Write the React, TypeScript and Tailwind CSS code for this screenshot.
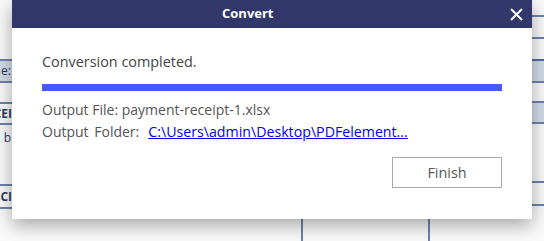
import React from "react";

const font = { fontFamily: '"Open Sans", "Noto Sans", sans-serif' };

function RightStrip() {
  return (
    <div className="flex w-[12px] flex-col">
      <div className="h-[15px]" />
      <div className="h-[2px] bg-[#6a86ab]" />
      <div className="h-[20px]" />
      <div className="h-[2px] bg-[#6a86ab]" />
      <div className="h-[20px]" />
      <div className="h-[2px] bg-[#4f6f99]" />
      <div className="h-[20px] bg-[#d3dcea]" />
      <div className="h-[2px] bg-[#6a86ab]" />
      <div className="h-[18px]" />
      <div className="h-[2px] bg-[#6a86ab]" />
      <div className="h-[19px] bg-[#d3dcea]" />
      <div className="h-[2px] bg-[#6a86ab]" />
      <div className="h-[57px]" />
      <div className="h-[2px] bg-[#6a86ab]" />
      <div className="h-[21px]" />
      <div className="h-[2px] bg-[#6a86ab]" />
    </div>
  );
}

function LeftStrip() {
  return (
    <div className="flex w-[12px] flex-col overflow-hidden whitespace-nowrap text-[12px] leading-none text-[#2b3d5a]" style={font}>
      <div className="h-[59px]" />
      <div className="flex h-[24px] items-center justify-end border-y-2 border-[#6a86ab] bg-[#d3dcea] pr-[1px]">e:</div>
      <div className="h-[19px]" />
      <div className="flex h-[23px] items-center justify-end border-y-2 border-[#6a86ab] font-bold">CEI</div>
      <div className="flex h-[26px] items-center justify-end pr-[1px]">ld b</div>
      <div className="h-[33px]" />
      <div className="flex h-[25px] items-center justify-end border-y-2 border-[#6a86ab] font-bold">SCI</div>
    </div>
  );
}

export default function App() {
  return (
    <div className="relative h-[241px] w-[544px] overflow-hidden bg-[#fafafa]" style={font}>
      {/* background */}
      <div className="flex h-full w-full justify-between">
        <LeftStrip />
        <div className="flex flex-1 flex-col justify-end">
          <div className="flex h-[22px]">
            <div className="w-[289px]" />
            <div className="w-[2px] bg-[#6a86ab]" />
            <div className="w-[125px]" />
            <div className="w-[2px] bg-[#6a86ab]" />
          </div>
        </div>
        <RightStrip />
      </div>

      {/* dialog */}
      <div className="absolute left-[12px] top-0 flex h-[219px] w-[520px] flex-col bg-white shadow-[0_6px_18px_rgba(0,0,0,0.35)]">
        <div className="relative flex h-[28px] items-center bg-[#31376b]">
          <div className="w-full pl-[210px] text-[13px] font-bold text-white">Convert</div>
          <svg className="absolute right-[9px] top-[8px]" width="13" height="13" viewBox="0 0 13 13">
            <path d="M1 1 L12 12 M12 1 L1 12" stroke="white" strokeWidth="2" />
          </svg>
        </div>
        <div className="flex flex-col px-[30px]">
          <div className="mt-[24px] text-[14.4px] leading-[20px] text-[#444]">Conversion completed.</div>
          <div className="mt-[12px] h-[7px] w-[460px] bg-[#4658ff]" />
          <div className="mt-[8px] text-[14px] leading-[22px] text-[#555]">Output File: payment-receipt-1.xlsx</div>
          <div className="text-[14px] leading-[22px] text-[#555]">
            <span className="[word-spacing:2px]">Output Folder:</span>
            <span className="ml-[9px] text-[14.2px] text-[#0000ee] underline">C:\Users\admin\Desktop\PDFelement...</span>
          </div>
          <div className="mt-[14px] flex justify-end">
            <button className="h-[31px] w-[110px] border border-[#aaa] bg-white text-[14.4px] text-[#555]">Finish</button>
          </div>
        </div>
      </div>
    </div>
  );
}
